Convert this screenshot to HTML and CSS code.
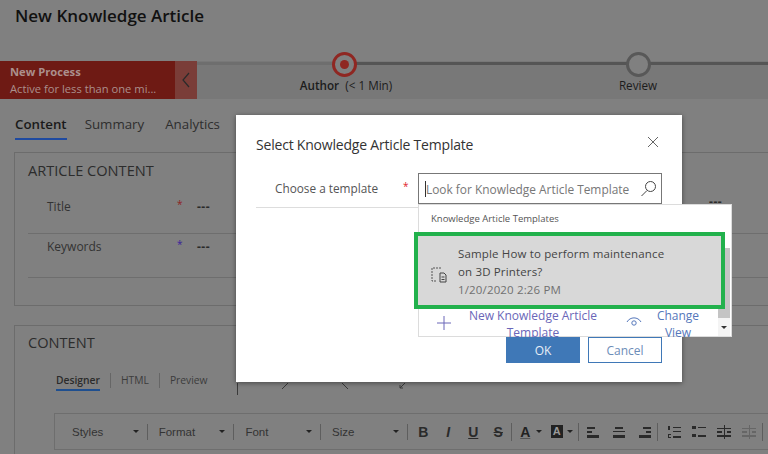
FILE: index.html
```html
<!DOCTYPE html>
<html lang="en">
<head>
  <meta charset="UTF-8">
  <meta name="viewport" content="width=device-width, initial-scale=1.0">
  <title>New Knowledge Article</title>
  <link rel="stylesheet" href="styles.css">
</head>
<body>
  <div class="page">
    <div class="header">
      <h1>New Knowledge Article</h1>
    </div>

    <div class="process">
      <div class="process-flag">
        <strong>New Process</strong>
        <span>Active for less than one mi...</span>
      </div>
      <div class="process-toggle">
        <svg width="10" height="16" viewBox="0 0 10 16"><path d="M8 1 2 8l6 7" fill="none" stroke="#2a2a2a" stroke-width="1.2"/></svg>
      </div>
      <div class="stages">
        <div class="stage stage-author">
          <div class="target"><i></i></div>
          <p><b>Author</b>&nbsp; (&lt; 1 Min)</p>
        </div>
        <div class="stage stage-review">
          <div class="ring"></div>
          <p>Review</p>
        </div>
      </div>
    </div>

    <div class="tabs">
      <a class="active">Content</a>
      <a>Summary</a>
      <a>Analytics</a>
    </div>

    <div class="section section-article">
      <h2>ARTICLE CONTENT</h2>
      <div class="field field-title">
        <label>Title</label>
        <em class="req">*</em>
        <span>---</span>
        <span class="field-more">---</span>
      </div>
      <div class="field">
        <label>Keywords</label>
        <em class="rec">*</em>
        <span>---</span>
      </div>
    </div>

    <div class="section section-content">
      <h2>CONTENT</h2>
      <div class="editor-tabs">
        <a class="active">Designer</a>
        <a>HTML</a>
        <a>Preview</a>
        <svg class="editor-marks" width="180" height="18" viewBox="0 0 180 18"><path d="M.5 5v12M51 5l-6 6M105 5l6 6M168 5l-5 5M163 7v3h3" fill="none" stroke="#3a3a3a"/></svg>
      </div>
      <div class="toolbar">
        <div class="combo">Styles<i class="caret"></i></div>
        <div class="combo">Format<i class="caret"></i></div>
        <div class="combo">Font<i class="caret"></i></div>
        <div class="combo">Size<i class="caret"></i></div>
        <div class="tool-group text-tools">
          <b>B</b>
          <b class="italic">I</b>
          <b class="under">U</b>
          <b class="strike">S</b>
        </div>
        <div class="tool-group color-tools">
          <b class="under under-grey">A</b><i class="caret"></i>
          <b class="filled">A</b><i class="caret"></i>
        </div>
        <div class="tool-group align-tools">
          <svg width="14" height="14" viewBox="0 0 14 14"><path d="M1 2h8v2H1zM1 6h5v2H1zM1 10h12v3H1z" fill="#2a2a2a"/></svg>
          <svg width="14" height="14" viewBox="0 0 14 14"><path d="M3 2h8v2H3zM1 6h12v1H1zM1 10h12v3H1z" fill="#2a2a2a"/></svg>
          <svg width="14" height="14" viewBox="0 0 14 14"><path d="M5 2h8v2H5zM8 6h5v2H8zM1 10h12v3H1z" fill="#2a2a2a"/></svg>
        </div>
        <div class="tool-group list-tools">
          <svg width="14" height="14" viewBox="0 0 14 14"><path d="M1 1h2v4H1zM1 9h3v1H2v2h2v1H1zM6 2h8v1H6zM6 6h8v1H6zM6 11h8v2H6z" fill="#2a2a2a"/></svg>
          <svg width="14" height="14" viewBox="0 0 14 14"><path d="M0 1h4v3H0zM0 9h4v3H0zM6 2h8v1H6zM6 10h8v2H6z" fill="#2a2a2a"/></svg>
          <svg width="14" height="14" viewBox="0 0 14 14"><path d="M7 0h1v14H7zM0 3h14v1H0zM0 6h5v2H0zM10 6h4v2h-4zM0 10h14v2H0z" fill="#2a2a2a"/></svg>
          <svg width="14" height="14" viewBox="0 0 14 14"><path d="M7 0h1v14H7zM0 3h14v1H0zM0 6h5v2H0zM10 6h4v2h-4zM0 10h14v2H0z" fill="#666"/></svg>
        </div>
      </div>
    </div>
  </div>

  <div class="modal">
    <div class="modal-head">
      <h3>Select Knowledge Article Template</h3>
      <svg class="close" width="12" height="12" viewBox="0 0 12 12"><path d="M1 1l10 10M11 1 1 11" fill="none" stroke="#666" stroke-width="1"/></svg>
    </div>
    <div class="modal-row">
      <label>Choose a template</label>
      <em class="req">*</em>
      <div class="lookup">
        <span class="cursor"></span>
        <span class="placeholder">Look for Knowledge Article Template</span>
        <svg width="17" height="17" viewBox="0 0 17 17"><circle cx="10.5" cy="6.5" r="5" fill="none" stroke="#444" stroke-width="1"/><path d="M7 10.500 1.500 16" fill="none" stroke="#444" stroke-width="1"/></svg>
      </div>
    </div>
    <div class="modal-actions">
      <button class="btn-ok">OK</button>
      <button class="btn-cancel">Cancel</button>
    </div>

    <div class="dropdown">
      <div class="dropdown-title">Knowledge Article Templates</div>
      <div class="result">
        <svg width="16" height="16" viewBox="0 0 16 16"><path d="M10 1H1v13h5" fill="none" stroke="#555" stroke-width="1" stroke-dasharray="2 1"/><path d="M9 6h4l2 2v7H9z" fill="#d8d8d8" stroke="#444"/><path d="M10.500 10h3M10.500 12.500h3" stroke="#444"/></svg>
        <div class="result-text">
          <p>Sample How to perform maintenance<br>on 3D Printers?</p>
          <p class="date">1/20/2020 2:26 PM</p>
        </div>
      </div>
      <div class="dropdown-foot">
        <svg width="14" height="14" viewBox="0 0 14 14"><path d="M7 0v14M0 7h14" stroke="#6a66b8" stroke-width="1"/></svg>
        <a class="foot-new">New Knowledge Article Template</a>
        <svg class="eye" width="16" height="11" viewBox="0 0 16 11"><path d="M1 6c3-5.500 11-5.500 14 0" fill="none" stroke="#5577bb"/><circle cx="8" cy="7" r="2.200" fill="none" stroke="#5577bb"/></svg>
        <a class="foot-view">Change View</a>
      </div>
      <div class="scrollbar">
        <div class="thumb"></div>
        <i class="caret"></i>
      </div>
    </div>
  </div>
</body>
</html>
```

FILE: styles.css
```css
body {
  font-family: "Open Sans", "Noto Sans", Arial, sans-serif;
  background-color: #808080;
  color: #2a2a2a;
  margin: 0;
  width: 768px;
  height: 454px;
  overflow: hidden;
  position: relative;
}
h1, h2, h3, p {
  margin: 0;
  font-weight: normal;
}
.header {
  height: 61px;
  padding-left: 15px;
}
.header h1 {
  font-size: 17px;
  line-height: 32px;
  font-weight: 600;
  color: #111;
}

/* process bar */
.process {
  display: flex;
  height: 38px;
  background: #787878;
}
.process-flag {
  width: 165px;
  padding: 2px 0 0 10px;
  background: #6e1a14;
  color: #ab8f8c;
  font-size: 11.200px;
  line-height: 17px;
}
.process-flag strong, .process-flag span {
  display: block;
  white-space: nowrap;
}
.process-toggle {
  width: 22px;
  display: flex;
  align-items: center;
  justify-content: center;
  background: #7a3d38;
}
.stages {
  flex: 1;
  display: flex;
  align-items: flex-start;
  background: linear-gradient(to right, #6e6e6e 148px, #555 148px) 0 1px / 100% 3px no-repeat;
}
.stage {
  margin-top: -9px;
  display: flex;
  flex-direction: column;
  align-items: center;
  font-size: 11.700px;
  color: #1c1c1c;
}
.stage p {
  margin-top: 1px;
  line-height: 15px;
  white-space: nowrap;
}
.stage-author {
  width: 120px;
  margin-left: 87px;
  font-weight: 500;
}
.stage-author p {
  padding-left: 4px;
}
.stage-author b {
  font-weight: 600;
}
.stage-review {
  width: 80px;
  margin-left: 194px;
}
.target {
  box-sizing: border-box;
  width: 25px;
  height: 25px;
  border: 3px solid #8f2722;
  border-radius: 50%;
  background: #808080;
  display: flex;
  align-items: center;
  justify-content: center;
}
.target i {
  width: 9px;
  height: 9px;
  border-radius: 50%;
  background: #8f2722;
}
.ring {
  box-sizing: border-box;
  width: 25px;
  height: 25px;
  border: 3px solid #585858;
  border-radius: 50%;
  background: #808080;
}

/* tabs */
.tabs {
  display: flex;
  gap: 18px;
  height: 53px;
  padding: 15px 0 0 15px;
  box-sizing: border-box;
  font-size: 13.300px;
  color: #2e2e2e;
}
.tabs a {
  height: 24px;
  line-height: 20px;
}
.tabs a:last-child {
  margin-left: 3px;
}
.tabs a.active {
  font-weight: 600;
  color: #1a1a1a;
  border-bottom: 2px solid #1f4aa0;
}

/* sections */
.section {
  margin-left: 14px;
  border: 1px solid #6c6c6c;
  border-right: none;
  box-sizing: border-box;
  padding-left: 13px;
}
.section h2 {
  font-size: 14.600px;
  line-height: 20px;
  color: #2c2c2c;
}
.section-article {
  height: 154px;
  padding-top: 7px;
}
.section-content {
  height: 129px;
  margin-top: 19px;
  padding-top: 6px;
  border-bottom: none;
}
.field {
  display: flex;
  height: 44px;
  padding: 3px 0 0 19px;
  box-sizing: border-box;
  border-bottom: 1px solid #6e6e6e;
  font-size: 12px;
  line-height: 20px;
}
.field-title {
  margin-top: 8px;
  height: 46px;
  padding-top: 9px;
}
.field label {
  width: 130px;
  color: #333;
}
.field em {
  width: 20px;
  padding-top: 1px;
  font-style: normal;
  font-size: 10px;
  line-height: 12px;
}
.field span {
  font-weight: 700;
  letter-spacing: 0.5px;
}
.field-more {
  position: relative;
  top: -5px;
  margin-left: 499px;
}
.req {
  color: #8f1f1f;
}
.rec {
  color: #3a1f9a;
}
.editor-tabs {
  display: flex;
  margin: 21px 0 0 28px;
  height: 21px;
  font-size: 10.300px;
  color: #3c3c3c;
}
.editor-tabs a {
  height: 15px;
  line-height: 14px;
  padding-right: 10px;
  margin-right: 10px;
  border-right: 1px solid #666;
}
.editor-tabs a:nth-child(3) {
  border-right: none;
}
.editor-tabs a.active {
  position: relative;
  color: #2b2b2b;
  font-weight: 600;
}
.editor-tabs a.active::after {
  content: "";
  position: absolute;
  left: 0;
  right: 10px;
  bottom: -3px;
  height: 2px;
  background: #1f4f8f;
}
.editor-marks {
  flex: none;
  margin: 5px 0 0 9px;
}

/* toolbar */
.toolbar {
  display: flex;
  align-items: center;
  height: 37px;
  margin: 19px 0 0 26px;
  padding-left: 17px;
  border: 1px solid #6e6e6e;
  border-right: none;
  box-sizing: border-box;
  font-family: "Liberation Sans", Arial, sans-serif;
  font-size: 11.500px;
  color: #333;
}
.combo {
  display: flex;
  align-items: center;
  justify-content: space-between;
  box-sizing: border-box;
  flex: none;
  width: 75.700px;
  height: 16px;
  margin-right: 11px;
  padding-right: 8px;
  border-right: 1px solid #5e5e5e;
}
.caret {
  width: 0;
  height: 0;
  border: 3px solid transparent;
  border-top: 3px solid #222;
  border-bottom: none;
}
.tool-group {
  display: flex;
  align-items: center;
  flex: none;
  height: 18px;
  border-right: 1px solid #5e5e5e;
  box-sizing: border-box;
}
.combo:nth-child(4) {
  margin-right: 0;
}
.text-tools {
  width: 104px;
  padding-left: 10px;
  gap: 14px;
  font-size: 14px;
  color: #2a2a2a;
}
.text-tools b, .color-tools b {
  width: 11px;
  text-align: center;
}
.italic {
  font-style: italic;
}
.under {
  text-decoration: underline;
}
.strike {
  text-decoration: line-through;
}
.color-tools {
  width: 67px;
  padding-left: 8px;
  font-size: 14px;
  color: #222;
}
.color-tools .caret {
  margin: 0 9px 0 5px;
}
.under-grey {
  text-decoration-color: #555;
}
.color-tools .filled {
  background: #222;
  color: #999;
  width: 12px;
  height: 13px;
  line-height: 13px;
  font-size: 11px;
}
.color-tools .caret:last-child {
  margin: 0 0 0 4px;
}
.align-tools {
  width: 79px;
  padding-left: 7px;
  gap: 12px;
}
.list-tools {
  width: 105px;
  padding-left: 9px;
  gap: 11px;
}

/* dialog, sits over the page */
.modal {
  position: absolute;
  left: 236px;
  top: 115px;
  width: 446px;
  height: 267px;
  background: #fff;
  box-shadow: 0 1px 5px rgba(0, 0, 0, 0.45);
}
.modal-head {
  display: flex;
  justify-content: space-between;
  align-items: center;
  height: 58px;
  padding: 0 23px 0 20px;
}
.modal-head h3 {
  font-size: 14px;
  color: #333;
  letter-spacing: -0.2px;
}
.close {
  margin-top: -4px;
}
.modal-row {
  display: flex;
  margin: 0 20px;
  height: 34px;
  border-bottom: 1px solid #ddd;
  font-size: 11.800px;
  color: #555;
}
.modal-row label {
  width: 128px;
  padding: 6px 0 0 19px;
  line-height: 18px;
}
.modal-row .req {
  font-style: normal;
  font-size: 10px;
  color: #e0202a;
  width: 15px;
  padding-top: 7px;
  line-height: 12px;
}
.lookup {
  box-sizing: border-box;
  display: flex;
  align-items: center;
  flex: none;
  width: 244px;
  height: 31px;
  padding: 0 4px 0 6px;
  border: 1px solid #777;
  background: #fff;
}
.cursor {
  width: 1px;
  height: 16px;
  background: #333;
}
.placeholder {
  flex: 1;
  font-size: 11.900px;
  color: #777;
  white-space: nowrap;
}
.modal-actions {
  position: absolute;
  right: 20px;
  top: 222px;
  display: flex;
  gap: 8px;
}
.modal-actions button {
  width: 74px;
  height: 26px;
  font-family: inherit;
  font-size: 12px;
  box-sizing: border-box;
}
.btn-ok {
  background: #3f78b7;
  color: #e8eef6;
  border: none;
}
.btn-cancel {
  background: #fff;
  color: #6c8db8;
  border: 1px solid #3f78b7;
}

/* lookup results */
.dropdown {
  position: absolute;
  left: 182px;
  top: 89px;
  width: 314px;
  height: 133px;
  box-sizing: border-box;
  background: #fff;
  border: 1px solid #dcdcdc;
  clip-path: inset(0 0 0 -6px);
}
.dropdown-title {
  height: 31px;
  padding-left: 12px;
  font-size: 9.500px;
  line-height: 28px;
  color: #555;
}
.result {
  position: relative;
  box-sizing: border-box;
  display: flex;
  align-items: center;
  width: 303px;
  height: 69px;
  margin-left: -1px;
  padding-left: 13px;
  background: #d8d8d8;
  outline: 4px solid #22b14c;
  z-index: 2;
}
.result svg {
  margin-top: 9px;
}
.result-text {
  margin-left: 11px;
  font-size: 11.500px;
  line-height: 18px;
  color: #444;
  letter-spacing: 0.15px;
  white-space: nowrap;
  padding-top: 3px;
}
.date {
  color: #707070;
}
.dropdown-foot {
  display: flex;
  align-items: flex-start;
  width: 298px;
  margin-top: 2px;
  padding-left: 18px;
  box-sizing: border-box;
  font-size: 12px;
  line-height: 17px;
  color: #6a66b8;
  text-align: center;
}
.dropdown-foot > svg {
  margin-top: 9px;
}
.foot-new {
  width: 130px;
  margin: 0 28px 0 17px;
  flex: none;
}
.foot-view {
  width: 46px;
  margin-left: 13px;
  color: #5577bb;
  flex: none;
}
.scrollbar {
  position: absolute;
  top: 43px;
  right: 1px;
  width: 12px;
  bottom: 0;
  display: flex;
  flex-direction: column;
  align-items: center;
  background: #f4f4f4;
}
.thumb {
  width: 100%;
  flex: none;
  height: 70px;
  background: #c4c4c4;
}
.scrollbar .caret {
  margin-top: 8px;
  border-top-color: #333;
}
```
